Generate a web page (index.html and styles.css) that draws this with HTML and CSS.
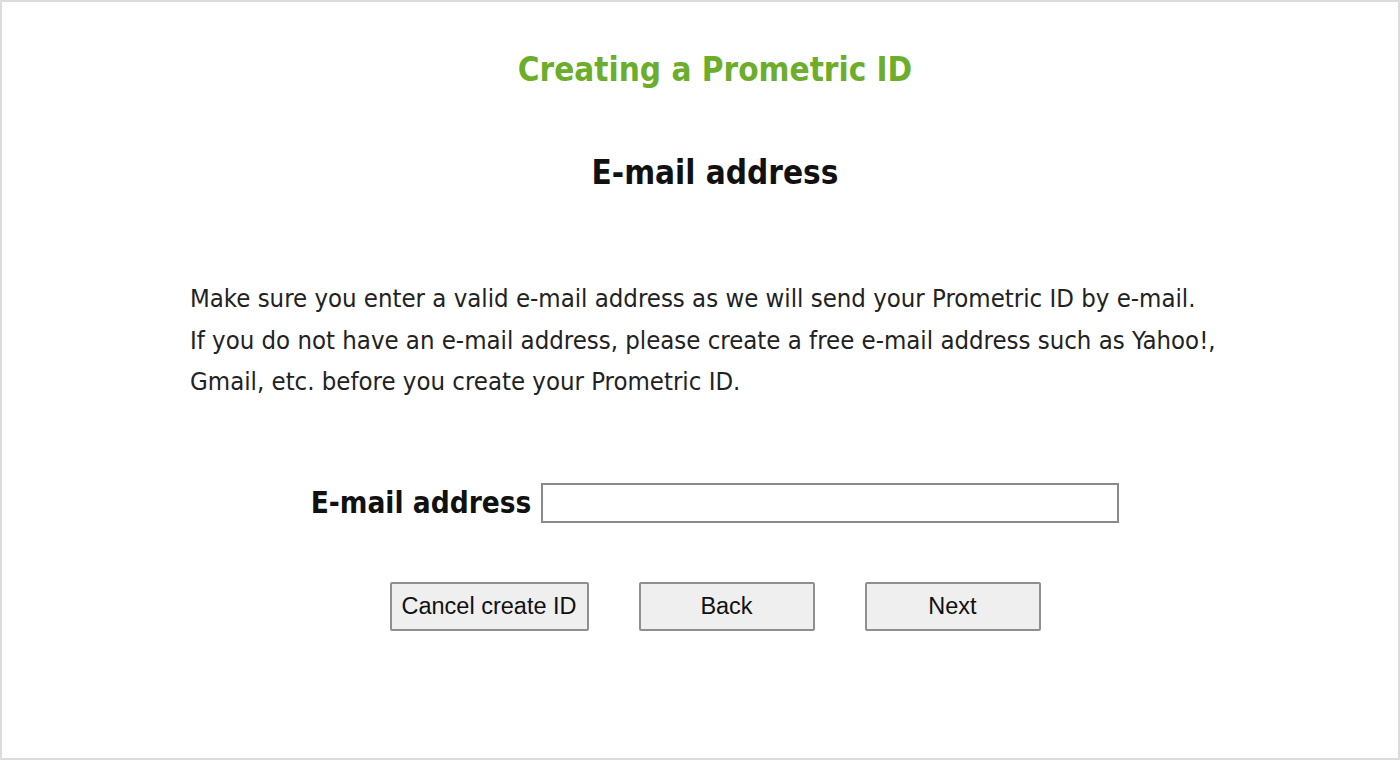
FILE: index.html
```html
<!DOCTYPE html>
<html lang="en">
<head>
<meta charset="utf-8">
<title>Creating a Prometric ID</title>
<link rel="stylesheet" href="styles.css">
</head>
<body>
<div class="frame">
  <main class="content">
    <h1 class="title">Creating a Prometric ID</h1>
    <h2 class="subtitle">E-mail address</h2>
    <p class="intro">Make sure you enter a valid e-mail address as we will send your Prometric ID by e-mail.<br>If you do not have an e-mail address, please create a free e-mail address such as Yahoo!,<br>Gmail, etc. before you create your Prometric ID.</p>
    <form class="form">
      <div class="field">
        <label class="label" for="email">E-mail address</label>
        <input class="input" id="email" type="text">
      </div>
      <div class="actions">
        <button type="button" class="btn btn-cancel">Cancel create ID</button>
        <button type="button" class="btn">Back</button>
        <button type="button" class="btn">Next</button>
      </div>
    </form>
  </main>
</div>
</body>
</html>
```

FILE: styles.css
```css
html, body {
  margin: 0;
  padding: 0;
  background: #ffffff;
}
.frame {
  box-sizing: border-box;
  width: 1400px;
  height: 760px;
  border: 2px solid #dcdcdc;
  background: #fff;
}
.content {
  width: 1050px;
  margin-left: 188px;
  font-family: "DejaVu Sans Condensed", "DejaVu Sans", sans-serif;
  color: #222;
}
.title {
  margin: 0;
  padding-top: 44px;
  text-align: center;
  font-size: 33px;
  line-height: 48px;
  font-weight: bold;
  color: #6dad2c;
}
.subtitle {
  margin: 0;
  margin-top: 57px;
  text-align: center;
  font-size: 33px;
  line-height: 44px;
  font-weight: bold;
  color: #111;
}
.intro {
  margin: 0;
  margin-top: 83px;
  font-size: 25.5px;
  line-height: 41.5px;
  color: #222;
}
.form {
  margin-top: 80px;
}
.field {
  display: flex;
  justify-content: center;
  align-items: center;
  gap: 10px;
}
.label {
  font-size: 29.5px;
  font-weight: bold;
  color: #111;
}
.input {
  box-sizing: border-box;
  width: 578px;
  height: 40px;
  border: 2px solid #8a8a8a;
  background: #fff;
  margin: 0;
  padding: 0 6px;
}
.actions {
  display: flex;
  justify-content: center;
  gap: 50px;
  margin-top: 59px;
}
.btn {
  box-sizing: border-box;
  width: 176px;
  height: 49px;
  background: #efefef;
  border: 2px solid #8f8f8f;
  border-radius: 2px;
  font-family: "Liberation Sans", Arial, sans-serif;
  font-size: 23.5px;
  color: #111;
  padding: 0;
}
.btn-cancel {
  width: 199px;
}
```
